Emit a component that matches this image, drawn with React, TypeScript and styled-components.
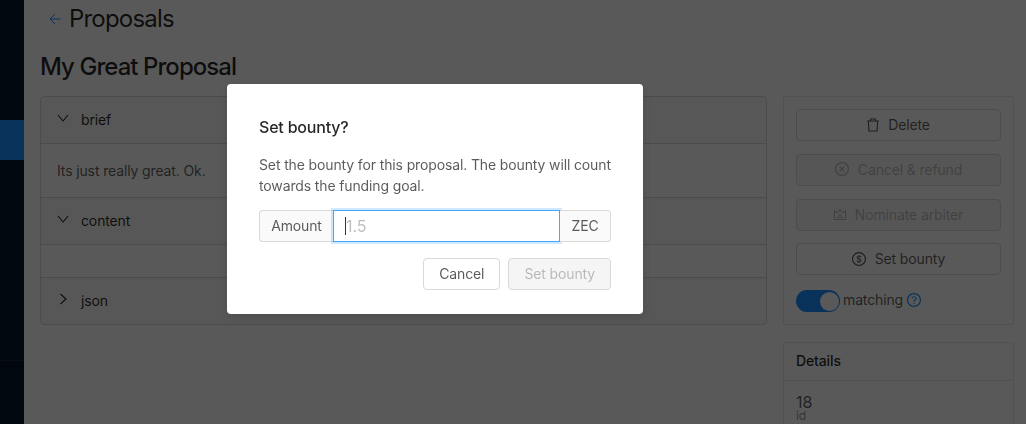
import * as React from "react"
import styled, { createGlobalStyle } from "styled-components"
import { AiOutlineCloseCircle, AiOutlineDollar, AiOutlineQuestionCircle } from "react-icons/ai"

const GlobalStyle = createGlobalStyle`
    html, body {
        margin: 0;
        height: 100%;
        overflow: hidden;
        background: #fff;
        font-family: Inter, "Liberation Sans", sans-serif;
        font-size: 14px;
        letter-spacing: -0.13px;
        color: rgba(0, 0, 0, 0.65);
    }
    * {
        box-sizing: border-box;
    }
`

const Layout = styled.div`
    display: flex;
    height: 424px;
    overflow: hidden;
`

const Sider = styled.div`
    width: 24px;
    flex: none;
    background: #001529;
    padding-top: 120px;
`

const SiderItem = styled.div`
    height: 40px;
    background: #1890ff;
`

const SiderRule = styled.div`
    height: 1px;
    margin-top: 200px;
    background: #1d2a36;
`

const Content = styled.div`
    flex: 1;
    padding: 0 12px 0 16px;
`

const PageHeader = styled.div`
    height: 38px;
    padding: 0 0 1px 9px;
    display: flex;
    align-items: center;
    gap: 8px;
    font-size: 24px;
    letter-spacing: -0.8px;
    font-weight: 400;
    color: rgba(0, 0, 0, 0.85);
    svg {
        color: #1890ff;
    }
`

const Title = styled.h1`
    margin: 11px 0 0;
    height: 36px;
    line-height: 36px;
    font-size: 24px;
    font-weight: 500;
    letter-spacing: -0.95px;
    color: rgba(0, 0, 0, 0.85);
`

const Columns = styled.div`
    display: flex;
    align-items: flex-start;
    gap: 16px;
    margin-top: 11px;
`

const Collapse = styled.div`
    width: 727px;
    flex: none;
    height: 229px;
    background: #fafafa;
    border: 1px solid #d9d9d9;
    border-radius: 4px;
    overflow: hidden;
`

const CollapseHeader = styled.div<{ $first?: boolean }>`
    height: ${(p) => (p.$first ? 46 : 47)}px;
    display: flex;
    align-items: center;
    padding: 0 0 2px 16px;
    color: rgba(0, 0, 0, 0.85);
    border-top: ${(p) => (p.$first ? "none" : "1px solid #d9d9d9")};
    svg {
        flex: none;
        margin: -3px 12px 0 0;
    }
`

const CollapseBody = styled.div<{ $height: number }>`
    height: ${(p) => p.$height}px;
    display: flex;
    align-items: center;
    padding-left: 16px;
    background: #fff;
    border-top: 1px solid #d9d9d9;
`

const Side = styled.div`
    width: 231px;
    flex: none;
`

const Card = styled.div`
    background: #fff;
    border: 1px solid #e8e8e8;
    border-radius: 2px;
`

const ActionCard = styled(Card)`
    height: 229px;
    padding: 12px;
    display: flex;
    flex-direction: column;
    gap: 12.8px;
`

const ActionButton = styled.div<{ $disabled?: boolean }>`
    height: 32px;
    flex: none;
    padding: 0 1px 1px 0;
    display: flex;
    align-items: center;
    justify-content: center;
    gap: 8px;
    border: 1px solid #d9d9d9;
    border-radius: 4px;
    background: ${(p) => (p.$disabled ? "#f5f5f5" : "#fff")};
    color: ${(p) => (p.$disabled ? "rgba(0, 0, 0, 0.25)" : "rgba(0, 0, 0, 0.65)")};
    svg {
        flex: none;
    }
`

const SwitchRow = styled.div`
    display: flex;
    align-items: center;
    margin-top: 2px;
    height: 22px;
    padding-bottom: 3px;
    svg {
        color: #1890ff;
        margin-left: 3px;
    }
`

const Switch = styled.div`
    width: 44px;
    height: 22px;
    flex: none;
    margin: 3px 3px 0 0;
    padding-right: 1px;
    border-radius: 11px;
    background: #1890ff;
    display: flex;
    justify-content: flex-end;
    align-items: center;
    &::after {
        content: "";
        width: 19px;
        height: 19px;
        border-radius: 50%;
        background: #fff;
    }
`

const DetailsCard = styled(Card)`
    margin-top: 17px;
`

const DetailsHead = styled.div`
    height: 38px;
    padding: 0 12px 2px;
    display: flex;
    align-items: center;
    font-weight: 500;
    color: rgba(0, 0, 0, 0.85);
    border-bottom: 1px solid #e8e8e8;
`

const DetailsBody = styled.div`
    padding: 12px 12px;
`

const DetailValue = styled.div`
    font-size: 16px;
    line-height: 18px;
`

const DetailLabel = styled.div`
    font-size: 12px;
    line-height: 10px;
    color: rgba(0, 0, 0, 0.45);
`

const Mask = styled.div`
    position: fixed;
    inset: 0;
    background: rgba(0, 0, 0, 0.65);
`

const Modal = styled.div`
    position: fixed;
    top: 84px;
    left: 227px;
    width: 416px;
    height: 230px;
    padding: 32px;
    background: #fff;
    border-radius: 4px;
    box-shadow: 0 4px 12px rgba(0, 0, 0, 0.15);
`

const ModalTitle = styled.div`
    font-size: 16px;
    line-height: 22px;
    font-weight: 500;
    letter-spacing: -0.2px;
    color: rgba(0, 0, 0, 0.85);
`

const ModalText = styled.div`
    margin-top: 16px;
    font-size: 14px;
    line-height: 21px;
`

const InputGroup = styled.div`
    display: flex;
    height: 32px;
    margin-top: 14px;
`

const Addon = styled.div<{ $side: "left" | "right" }>`
    display: flex;
    align-items: center;
    flex: none;
    justify-content: center;
    width: ${(p) => (p.$side === "left" ? 74 : 51)}px;
    padding-bottom: 1px;
    background: #fafafa;
    border: 1px solid #d9d9d9;
    border-${(p) => (p.$side === "left" ? "right" : "left")}: none;
    border-radius: ${(p) => (p.$side === "left" ? "4px 0 0 4px" : "0 4px 4px 0")};
`

const Input = styled.div`
    flex: 1;
    display: flex;
    align-items: center;
    padding-left: 11px;
    border: 1px solid #40a9ff;
    box-shadow: 0 0 0 2px rgba(24, 144, 255, 0.2);
    color: #bfbfbf;
    font-size: 16px;
    &::before {
        content: "";
        width: 1px;
        height: 18px;
        background: #333;
    }
`

const ModalFooter = styled.div`
    display: flex;
    justify-content: flex-end;
    gap: 8px;
    margin-top: 16px;
`

const ModalButton = styled.div<{ $disabled?: boolean }>`
    height: 32px;
    padding: 0 15px 1px;
    display: flex;
    align-items: center;
    border: 1px solid #d9d9d9;
    border-radius: 4px;
    background: ${(p) => (p.$disabled ? "#f5f5f5" : "#fff")};
    color: ${(p) => (p.$disabled ? "rgba(0, 0, 0, 0.25)" : "rgba(0, 0, 0, 0.65)")};
`

const ArrowLeft = () => (
    <svg width="12" height="12" viewBox="0 0 12 12" fill="none" stroke="currentColor" strokeWidth="1">
        <path d="M11.5 6H1M6 1 1 6l5 5" />
    </svg>
)

const ChevronDown = () => (
    <svg width="12" height="8" viewBox="0 0 12 8" fill="none" stroke="currentColor" strokeWidth="1.1">
        <path d="M1 1l5 6 5-6" />
    </svg>
)

const ChevronRight = () => (
    <svg width="12" height="12" viewBox="0 0 12 12" fill="none" stroke="currentColor" strokeWidth="1.1">
        <path d="M3.5 1l5.5 5-5.5 5" />
    </svg>
)

const TrashIcon = () => (
    <svg width="14" height="14" viewBox="0 0 14 14" fill="none" stroke="currentColor" strokeWidth="1.1">
        <path d="M1 3h12M4.6 3V1h4.8v2M2.4 3l.5 10h8.2l.5-10" />
    </svg>
)

const CrownIcon = () => (
    <svg width="14" height="14" viewBox="0 0 14 14" fill="none" stroke="currentColor" strokeWidth="1">
        <path d="M1.5 3.5 4.5 6 7 2l2.5 4 3-2.5V12.5h-11z" />
        <path d="M5 9l2-1.5L9 9v1.5H5z" />
    </svg>
)

export default function App() {
    return (
        <>
            <GlobalStyle />
            <Layout>
                <Sider>
                    <SiderItem />
                    <SiderRule />
                </Sider>
                <Content>
                    <PageHeader>
                        <ArrowLeft />
                        Proposals
                    </PageHeader>
                    <Title>My Great Proposal</Title>
                    <Columns>
                        <Collapse>
                            <CollapseHeader $first>
                                <ChevronDown />
                                brief
                            </CollapseHeader>
                            <CollapseBody $height={54}>Its just really great. Ok.</CollapseBody>
                            <CollapseHeader>
                                <ChevronDown />
                                content
                            </CollapseHeader>
                            <CollapseBody $height={33} />
                            <CollapseHeader>
                                <ChevronRight />
                                json
                            </CollapseHeader>
                        </Collapse>
                        <Side>
                            <ActionCard>
                                <ActionButton>
                                    <TrashIcon />
                                    Delete
                                </ActionButton>
                                <ActionButton $disabled>
                                    <AiOutlineCloseCircle size={16} />
                                    Cancel &amp; refund
                                </ActionButton>
                                <ActionButton $disabled>
                                    <CrownIcon />
                                    Nominate arbiter
                                </ActionButton>
                                <ActionButton>
                                    <AiOutlineDollar size={16} />
                                    Set bounty
                                </ActionButton>
                                <SwitchRow>
                                    <Switch />
                                    matching
                                    <AiOutlineQuestionCircle size={16} />
                                </SwitchRow>
                            </ActionCard>
                            <DetailsCard>
                                <DetailsHead>Details</DetailsHead>
                                <DetailsBody>
                                    <DetailValue>18</DetailValue>
                                    <DetailLabel>id</DetailLabel>
                                </DetailsBody>
                            </DetailsCard>
                        </Side>
                    </Columns>
                </Content>
            </Layout>
            <Mask />
            <Modal>
                <ModalTitle>Set bounty?</ModalTitle>
                <ModalText>
                    Set the bounty for this proposal. The bounty will count towards the funding goal.
                </ModalText>
                <InputGroup>
                    <Addon $side="left">Amount</Addon>
                    <Input>1.5</Input>
                    <Addon $side="right">ZEC</Addon>
                </InputGroup>
                <ModalFooter>
                    <ModalButton>Cancel</ModalButton>
                    <ModalButton $disabled>Set bounty</ModalButton>
                </ModalFooter>
            </Modal>
        </>
    )
}
